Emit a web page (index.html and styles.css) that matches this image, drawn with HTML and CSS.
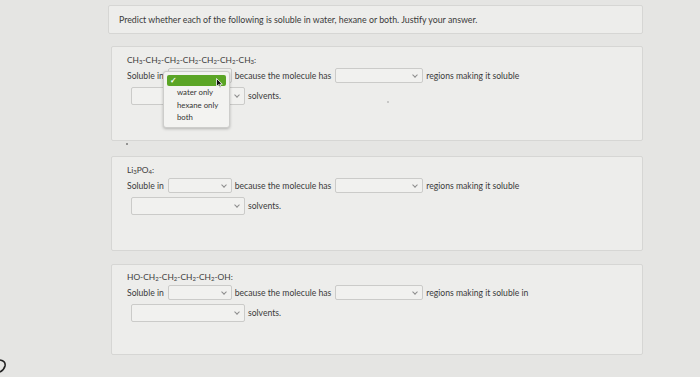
FILE: index.html
```html
<!DOCTYPE html>
<html lang="en">
<head>
  <meta charset="UTF-8" />
  <title>Solubility question</title>
  <link rel="stylesheet" href="styles.css">
</head>
<body>
  <div class="page">
    <div class="intro">Predict whether each of the following is soluble in water, hexane or both. Justify your answer.</div>

    <!-- question 1 : heptane, dropdown open -->
    <div class="card">
      <div class="formula">CH<sub>3</sub>-CH<sub>2</sub>-CH<sub>2</sub>-CH<sub>2</sub>-CH<sub>2</sub>-CH<sub>2</sub>-CH<sub>3</sub>:</div>
      <div class="row">
        <span>Soluble in</span>
        <div class="select small"></div>
        <span>because the molecule has</span>
        <div class="select mid"></div>
        <span>regions making it soluble</span>
      </div>
      <div class="row second">
        <div class="select wide"></div>
        <span>solvents.</span>
      </div>
      <div class="menu">
        <div class="picked">
          <span class="tick">&#10003;</span>
          <svg class="cursor" width="7" height="10" viewBox="0 0 7 10"><path d="M0.5 0.5 L0.5 8.5 L2.5 6.6 L3.8 9.4 L5 8.9 L3.8 6.2 L6.3 6.2 Z" fill="#111" stroke="#fff" stroke-width="0.8"/></svg>
        </div>
        <div class="opt">water only</div>
        <div class="opt">hexane only</div>
        <div class="opt">both</div>
      </div>
      <span class="speck one"></span>
      <span class="speck two"></span>
    </div>

    <!-- question 2 -->
    <div class="card">
      <div class="formula">Li<sub>3</sub>PO<sub>4</sub>:</div>
      <div class="row">
        <span>Soluble in</span>
        <div class="select small"></div>
        <span>because the molecule has</span>
        <div class="select mid"></div>
        <span>regions making it soluble</span>
      </div>
      <div class="row second">
        <div class="select wide"></div>
        <span>solvents.</span>
      </div>
    </div>

    <!-- question 3 -->
    <div class="card last">
      <div class="formula">HO-CH<sub>2</sub>-CH<sub>2</sub>-CH<sub>2</sub>-CH<sub>2</sub>-OH:</div>
      <div class="row">
        <span>Soluble in</span>
        <div class="select small"></div>
        <span>because the molecule has</span>
        <div class="select mid"></div>
        <span>regions making it soluble in</span>
      </div>
      <div class="row second">
        <div class="select wide"></div>
        <span>solvents.</span>
      </div>
    </div>
  </div>

  <svg class="edge-mark" width="8" height="16" viewBox="0 0 8 16"><path d="M0 2 Q6 3 5 8 Q4 12 0 14" fill="none" stroke="#222" stroke-width="1.6"/></svg>
</body>
</html>
```

FILE: styles.css
```css
body {
  margin: 0;
  height: 377px;
  overflow: hidden;
  background: #e5e5e3;
  font-family: 'Lato', 'Open Sans', sans-serif;
  color: #3a3a3a;
  font-size: 8.6px;
}
.page {
  padding: 5px 0 0 108px;
  width: 535px;
}
.intro {
  height: 29px;
  box-sizing: border-box;
  display: flex;
  align-items: center;
  padding-left: 10px;
  font-size: 8.8px;
  background: #ededeb;
  border: 1px solid #d6d6d4;
  border-radius: 2px;
}
.card {
  position: relative;
  margin: 12px 0 0 3px;
  height: 95px;
  box-sizing: border-box;
  padding: 7px 15px 0;
  background: #ededeb;
  border: 1px solid #d6d6d4;
  border-radius: 2px;
}
.card + .card { margin-top: 15px; }
.card.last {
  margin-top: 13px;
  height: 91px;
  padding-top: 6px;
}
.formula {
  height: 12px;
  line-height: 12px;
  font-size: 8.4px;
}
sub {
  font-size: 6px;
  vertical-align: -1px;
  line-height: 0;
}
.row {
  display: flex;
  align-items: center;
  gap: 3px;
  margin-top: 2px;
  height: 15px;
}
.row.second {
  margin-top: 4px;
  height: 18px;
  padding-left: 3px;
}
.select {
  position: relative;
  height: 100%;
  box-sizing: border-box;
  background: #f1f1ef;
  border: 1px solid #cbcbc9;
  border-radius: 2px;
  margin-left: 1px;
}
.select::after {
  content: "";
  position: absolute;
  right: 5px;
  top: 50%;
  width: 3px;
  height: 3px;
  margin-top: -3px;
  border-right: 1px solid #8c8c8c;
  border-bottom: 1px solid #8c8c8c;
  transform: rotate(45deg);
}
.select.small { width: 64px; }
.select.mid { width: 88px; }
.select.wide { width: 114px; }
.menu {
  position: absolute;
  left: 51px;
  top: 24px;
  width: 67px;
  height: 57px;
  box-sizing: border-box;
  padding: 3px 3px 0;
  background: #f3f3f1;
  border: 1px solid #cdcdcb;
  border-radius: 3px;
  box-shadow: 0 1px 3px rgba(0, 0, 0, 0.25);
}
.picked {
  position: relative;
  height: 11px;
  background: #5ba526;
  border-radius: 2px;
  color: #fff;
  font-size: 7.5px;
  font-weight: bold;
  line-height: 11px;
  padding-left: 3px;
}
.cursor {
  position: absolute;
  right: 3px;
  top: 3px;
}
.opt {
  height: 12.5px;
  line-height: 12.5px;
  padding-left: 10px;
  font-size: 7.8px;
  color: #333;
}
.opt:first-of-type { margin-top: 2px; }
.speck {
  position: absolute;
  width: 2px;
  height: 2px;
  border-radius: 1px;
  background: #777;
}
.speck.one { left: 14px; top: 96px; }
.speck.two { left: 275px; top: 54px; background: #bbb; }
.edge-mark {
  position: absolute;
  left: 0;
  top: 358px;
}
```
